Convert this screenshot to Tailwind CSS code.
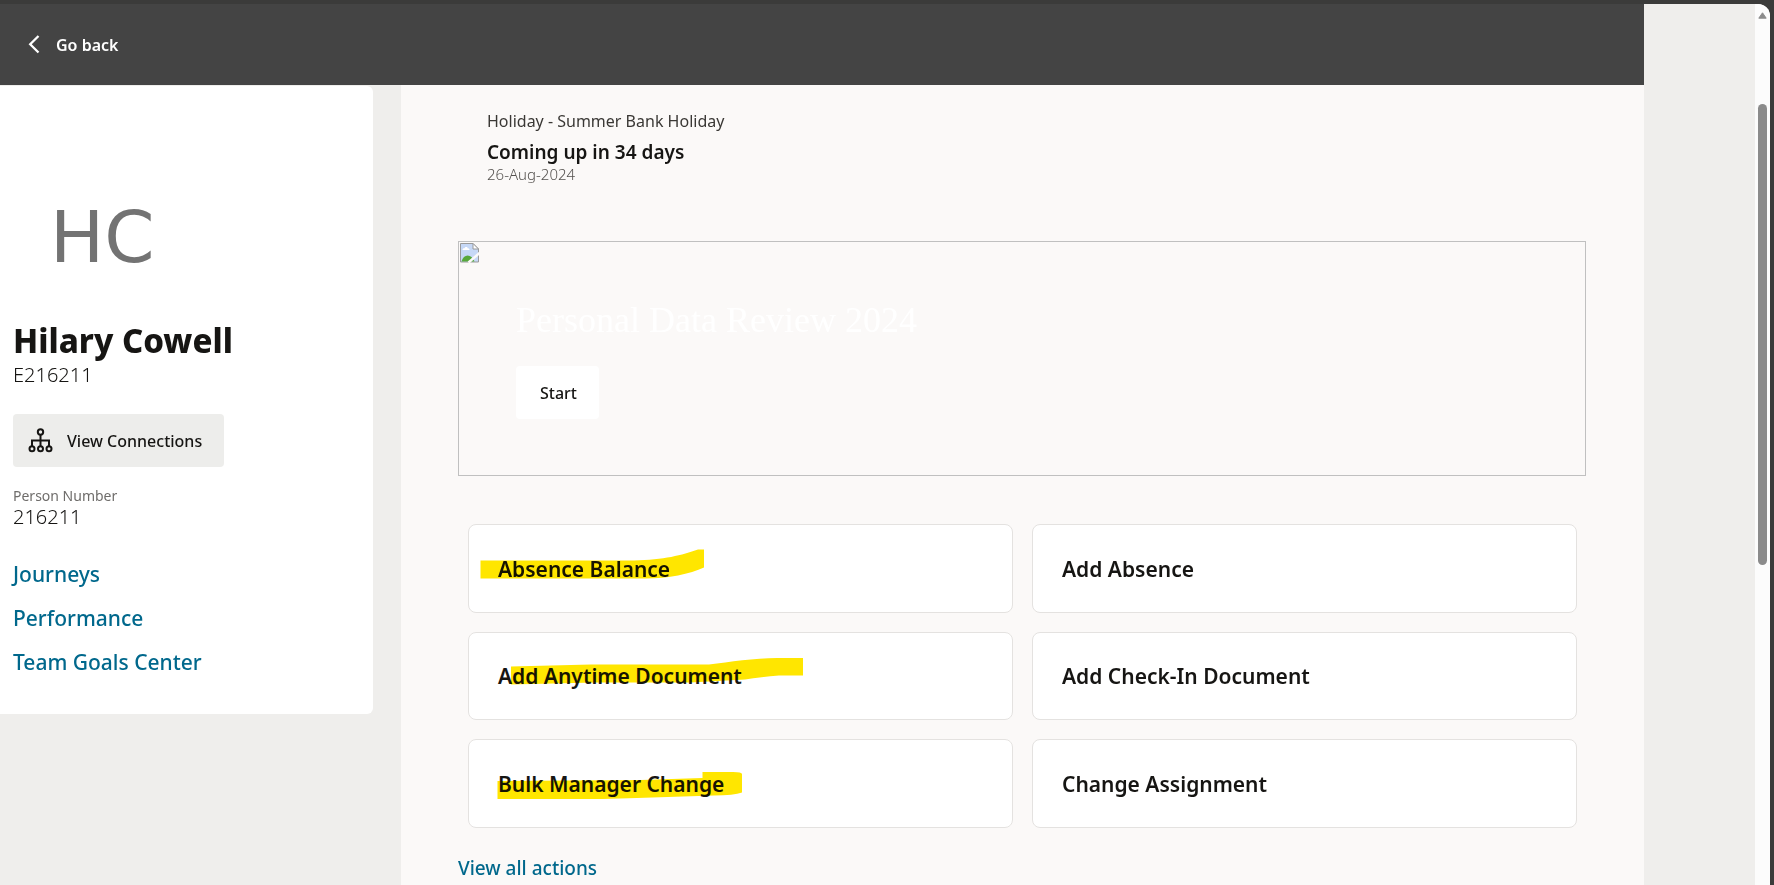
<!DOCTYPE html>
<html lang="en">
<head>
  <meta charset="UTF-8">
  <meta name="viewport" content="width=device-width, initial-scale=1.0">
  <title>Hilary Cowell</title>
  <script src="https://cdn.jsdelivr.net/npm/@tailwindcss/browser@4"></script>
</head>

<body class="bg-[#3b3b3a] font-['Noto_Sans','Open_Sans',sans-serif] text-[#161513]">
  <div class="flex min-h-screen pt-1 pr-1">
    <div class="flex flex-1 overflow-hidden rounded-tr-xl bg-[#efeeec]">

      <div class="flex flex-1 flex-col">
        <!-- Top bar -->
        <header class="flex h-[81px] items-center bg-[#444444] px-6">
          <button type="button" class="flex items-center gap-3 text-white">
            <svg class="h-5 w-5" viewBox="0 0 20 20" fill="none" stroke="currentColor" stroke-width="2.300"><path d="M14.500 1 6.200 9.200l8.300 8.300"/></svg>
            <span class="text-base font-semibold">Go back</span>
          </button>
        </header>

        <div class="flex flex-1 gap-7">
          <!-- Person panel -->
          <aside class="mt-px w-[373px] self-start rounded-r-md bg-white px-[13px] pt-[109px] pb-9">
            <div class="pl-[37px] font-['DejaVu_Sans',sans-serif] text-[72px] leading-[84px] text-[#737373]">HC</div>
            <h1 class="mt-10 text-[33px] leading-[44px] font-extrabold">Hilary Cowell</h1>
            <p class="text-[20px] leading-6 font-light">E216211</p>

            <button type="button" class="mt-[27px] flex h-[53px] items-center gap-3 rounded bg-[#ededeb] pr-[22px] pl-[14px]">
              <svg class="h-7 w-7" viewBox="0 0 28 28" fill="none" stroke="currentColor" stroke-width="2">
                <circle cx="13.500" cy="5" r="2.700"/>
                <circle cx="5" cy="21.700" r="2.500"/>
                <circle cx="13.500" cy="21.700" r="2.500"/>
                <circle cx="22" cy="21.700" r="2.500"/>
                <path d="M13.500 7.700v11.500M5 19.200V13.500h17v5.700"/>
              </svg>
              <span class="text-base font-medium">View Connections</span>
            </button>

            <dl class="mt-5">
              <dt class="text-sm leading-[18px] text-[#6f6d6b]">Person Number</dt>
              <dd class="text-[20px] leading-6 font-light">216211</dd>
            </dl>

            <nav class="mt-[29px] flex flex-col gap-3 text-[21px] leading-8 font-medium text-[#00688c]">
              <a href="#">Journeys</a>
              <a href="#">Performance</a>
              <a href="#">Team Goals Center</a>
            </nav>
          </aside>

          <main class="flex-1 bg-[#fbf9f8] pt-6 pr-[58px] pl-[57px]">
            <section class="pl-[29px]">
              <p class="text-base text-[#3a3835]">Holiday - Summer Bank Holiday</p>
              <h2 class="mt-[5px] text-[19px] leading-7 font-semibold">Coming up in 34 days</h2>
              <p class="text-[15px] leading-4 font-light text-[#55524f]">26-Aug-2024</p>
            </section>

            <!-- Banner, its image missing -->
            <section class="relative mt-[59px] h-[235px] border border-[#c0c0c0] pt-[58px] pl-[57px]">
              <svg class="absolute top-px left-px h-5 w-5" viewBox="0 0 20 20">
                <path d="M.5.500h12.500l5.500 5.500v13H.5z" fill="#c6d8f6" stroke="#9a9a9a"/>
                <path d="M13 .5v5.500h5.500z" fill="#fff" stroke="#9a9a9a"/>
                <path d="M2.500 7c0-1.500 1-2 2-1.800C5 3.500 7.500 3.500 7.800 5.400 9 5.200 9.500 6 9.500 7z" fill="#fff"/>
                <path d="M1.500 18.500c2-8 10-8 13 0z" fill="#57a83a"/>
                <path d="M8.500 19.500 19.500 10" stroke="#fbf9f8" stroke-width="2.500"/>
              </svg>
              <h2 class="font-['Liberation_Serif',serif] text-[36px] leading-10 text-white">Personal Data Review 2024</h2>
              <button type="button" class="mt-[26px] h-[53px] rounded bg-white pr-[22px] pl-6 text-base font-medium">Start</button>
            </section>

            <!-- Quick actions -->
            <section class="mr-[9px] ml-[10px] mt-12 grid h-[304px] grid-cols-2 grid-rows-3 gap-[19px] text-[21px] font-semibold">
              <a href="#" class="relative flex items-center rounded-lg border border-[#e4e2e0] bg-white pt-0.5 pl-[29px]">
                Absence Balance
                <svg class="absolute -top-px -left-px h-[89px] w-[340px] mix-blend-multiply" viewBox="0 0 340 89" fill="#ffe600"><path d="M12.500 36.500H166C196 36 214 31 230 25.500h6v18C222 50 200 54.500 178 54.500H12.500z"/></svg>
              </a>
              <a href="#" class="flex items-center rounded-lg border border-[#e4e2e0] bg-white pt-0.5 pl-[29px]">Add Absence</a>
              <a href="#" class="relative flex items-center rounded-lg border border-[#e4e2e0] bg-white pt-0.5 pl-[29px]">
                Add Anytime Document
                <svg class="absolute -top-px -left-px h-[89px] w-[340px] mix-blend-multiply" viewBox="0 0 340 89" fill="#ffe600"><path d="M43 34.500 123 32.500H241C262 30 286 26 309 26h26v17.500h-24C299 44 288 46 277 47.500L222 50.500H127L43 52.500z"/></svg>
              </a>
              <a href="#" class="flex items-center rounded-lg border border-[#e4e2e0] bg-white pt-0.5 pl-[29px]">Add Check-In Document</a>
              <a href="#" class="relative flex items-center rounded-lg border border-[#e4e2e0] bg-white pt-0.5 pl-[29px]">
                Bulk Manager Change
                <svg class="absolute -top-px -left-px h-[89px] w-[340px] mix-blend-multiply" viewBox="0 0 340 89" fill="#ffe600"><path d="M29.500 42 173 41 234.500 39V33H265Q274 33 274 35V53.500Q266 56.500 246 56.500L169 59 135 60H29.500z"/></svg>
              </a>
              <a href="#" class="flex items-center rounded-lg border border-[#e4e2e0] bg-white pt-0.5 pl-[29px]">Change Assignment</a>
            </section>

            <a href="#" class="mt-[26px] inline-block text-[19px] leading-7 font-medium text-[#00688c]">View all actions</a>
          </main>
        </div>
      </div>

      <div class="w-[111px]"></div>

      <!-- Scrollbar -->
      <div class="flex w-[15px] flex-col items-center bg-[#fcfcfc] pt-2">
        <svg class="h-[7px] w-[9px]" viewBox="0 0 9 7"><path d="M4.500.8 8.200 6.200H.8z" fill="#8b8b8b" stroke="#8b8b8b" stroke-linejoin="round"/></svg>
        <div class="mt-[85px] h-[461px] w-[9px] rounded-full bg-[#8b8b8b]"></div>
      </div>
    </div>
  </div>
</body>
</html>
